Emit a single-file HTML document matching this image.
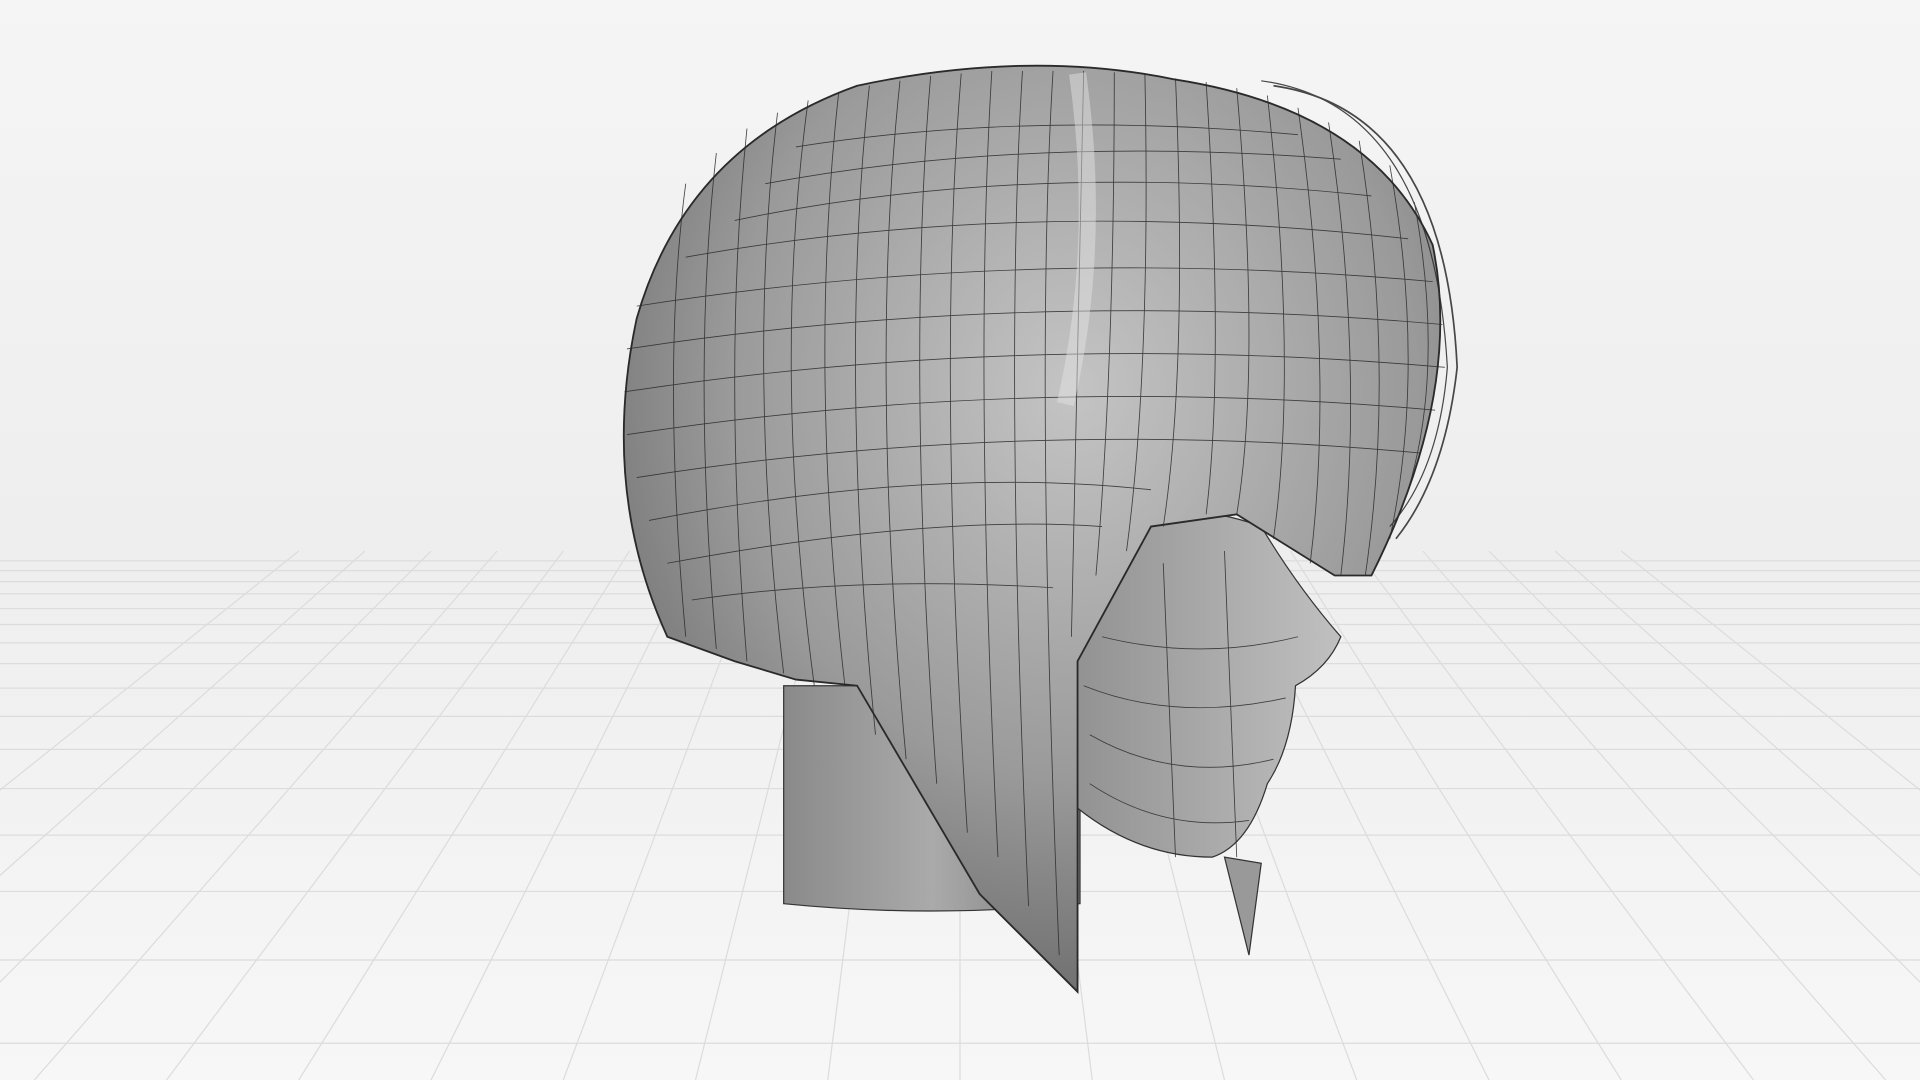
<!DOCTYPE html>
<html><head><meta charset="utf-8"><style>
html,body{margin:0;padding:0;width:1920px;height:1080px;overflow:hidden;background:#f2f2f2}
svg{display:block}
</style></head><body>
<svg width="1920" height="1080" viewBox="0 0 1568 882" preserveAspectRatio="none" xmlns="http://www.w3.org/2000/svg">
<defs>
<linearGradient id="bg" x1="0" y1="0" x2="0" y2="1">
<stop offset="0" stop-color="#f5f5f5"/><stop offset="0.5" stop-color="#eeeeee"/><stop offset="1" stop-color="#f7f7f7"/>
</linearGradient>
<radialGradient id="hair" cx="0.55" cy="0.35" r="0.7">
<stop offset="0" stop-color="#c4c4c4"/><stop offset="0.6" stop-color="#9a9a9a"/><stop offset="1" stop-color="#686868"/>
</radialGradient>
<linearGradient id="neck" x1="0" y1="0" x2="1" y2="0">
<stop offset="0" stop-color="#8a8a8a"/><stop offset="0.5" stop-color="#aaaaaa"/><stop offset="1" stop-color="#7a7a7a"/>
</linearGradient>
<linearGradient id="face" x1="0" y1="0" x2="1" y2="0">
<stop offset="0" stop-color="#8c8c8c"/><stop offset="1" stop-color="#c0c0c0"/>
</linearGradient>
</defs>
<rect width="1568" height="882" fill="url(#bg)"/>
<g stroke="#dcdcdc" stroke-width="1" fill="none">
<path d="M0 458H1568M0 466H1568M0 475H1568M0 485H1568M0 497H1568M0 510H1568M0 525H1568M0 542H1568M0 562H1568M0 585H1568M0 612H1568M0 644H1568M0 682H1568M0 728H1568M0 784H1568M0 852H1568"/>
<path d="M784 450L784 882M730 450L676 882M676 450L568 882M622 450L460 882M568 450L352 882M514 450L244 882M460 450L136 882M406 450L28 882M352 450L-80 882M298 450L-188 882M244 450L-296 882M838 450L892 882M892 450L1000 882M946 450L1108 882M1000 450L1216 882M1054 450L1324 882M1108 450L1432 882M1162 450L1540 882M1216 450L1648 882M1270 450L1756 882M1324 450L1864 882"/>
</g>
<path d="M640 560L640 738Q760 750 882 738L882 560Z" fill="url(#neck)" stroke="#333" stroke-width="1"/>
<path d="M850 440Q950 400 1030 430Q1060 480 1095 520Q1085 545 1058 560Q1055 610 1035 640Q1020 690 990 700Q930 700 880 660Z" fill="url(#face)" stroke="#333"/>
<path d="M1000 700L1020 780L1030 705Z" fill="#999" stroke="#333"/>
<path d="M545 520Q490 400 520 260Q560 120 700 70Q840 40 960 65Q1120 90 1170 200Q1195 320 1120 470L1090 470L1010 420L940 430L880 540L880 810L800 730L700 560L650 555L600 540Z" fill="url(#hair)" stroke="#2a2a2a" stroke-width="1.5"/>
<g stroke="#2a2a2a" stroke-width="0.7" fill="none" opacity="0.85">
<path d="M560 150Q540 300 560 520M585 125Q565 300 585 530M610 105Q590 300 610 540M635 92Q610 300 640 550M660 82Q630 300 665 560M685 75Q660 300 690 560M710 70Q685 300 715 600M735 66Q710 300 740 620M760 62Q740 300 765 640M785 60Q765 300 790 680M810 58Q795 300 815 700M835 58Q820 300 840 740M860 58Q845 300 865 780M885 58Q880 300 875 520M910 59Q910 300 895 470M935 61Q940 300 920 450M960 64Q970 300 950 430M985 67Q1000 300 985 420M1010 72Q1030 300 1010 420M1035 78Q1060 300 1040 440M1060 88Q1090 300 1070 460M1085 100Q1115 300 1095 470M1110 115Q1140 300 1115 470M1135 135Q1165 300 1135 440M1155 165Q1180 300 1150 400"/>
<path d="M520 250Q840 200 1170 230M512 285Q840 235 1178 265M510 320Q840 270 1180 300M512 355Q840 305 1172 335M520 390Q840 340 1160 370M530 425Q760 380 940 400M545 460Q760 420 900 430M565 490Q700 470 860 480M600 180Q840 130 1120 160M625 150Q840 110 1095 130M650 120Q840 90 1060 110M560 210Q840 160 1150 195"/>
<path d="M1040 70Q1180 90 1190 300Q1180 390 1140 440" stroke-width="1.4"/>
<path d="M1030 66Q1170 85 1182 300Q1175 385 1135 430" stroke-width="1"/>
<path d="M890 600Q960 640 1040 620M900 520Q980 540 1060 520M950 460L960 700M1000 450L1010 700M885 560Q960 590 1050 570M890 640Q950 680 1020 670"/>
</g>
<path d="M880 60Q900 200 870 330" stroke="#e6e6e6" stroke-width="14" fill="none" opacity="0.45"/>
</svg>
</body></html>
